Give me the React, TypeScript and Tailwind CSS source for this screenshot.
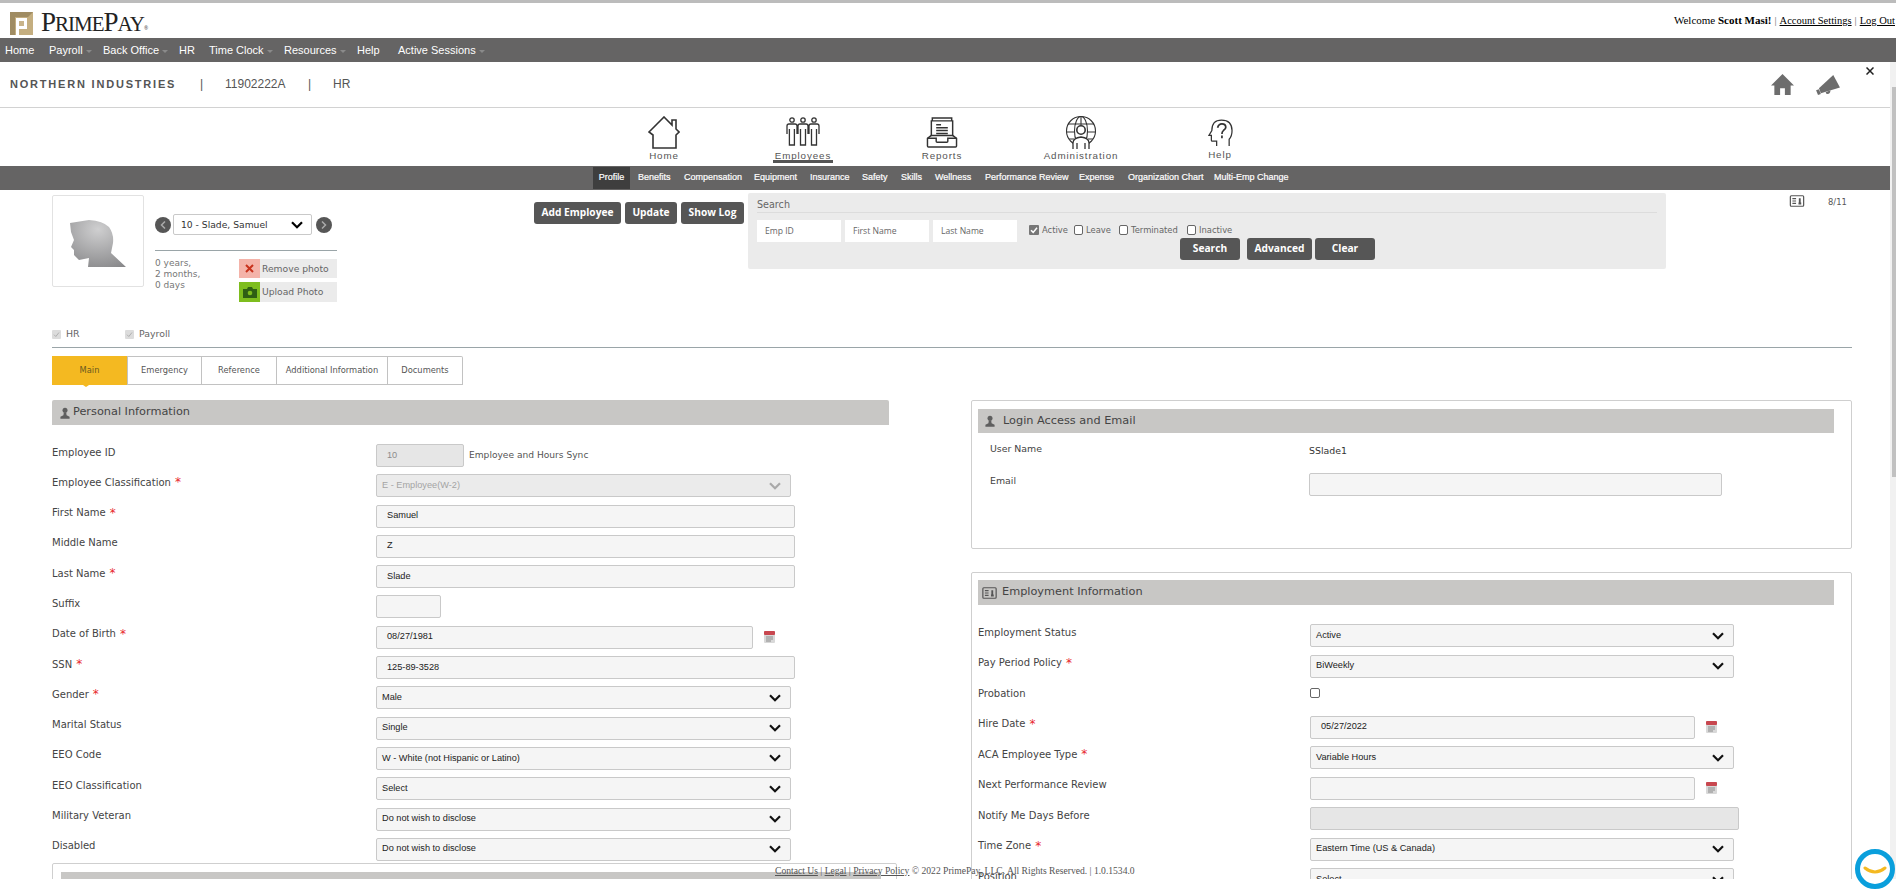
import type { ReactNode } from "react";

const sans = "font-['DejaVu_Sans',sans-serif]";
const arial = "font-['Liberation_Sans',Arial,sans-serif]";
const times = "font-['Liberation_Serif','Times_New_Roman',serif]";
const open = "font-['Open_Sans',sans-serif]";

const Chevron = ({ className = "" }: { className?: string }) => (
  <svg viewBox="0 0 12 8" className={`h-[8px] w-[12px] ${className}`} fill="none" stroke="currentColor" strokeWidth="2.2">
    <path d="M1 1.2 6 6.2 11 1.2" />
  </svg>
);

const PersonIcon = ({ className = "" }: { className?: string }) => (
  <svg viewBox="0 0 12 14" className={className} fill="#5f5f5f">
    <circle cx="6" cy="3.6" r="3" />
    <path d="M4.6 6h2.8l.5 3.6 3.6 2V14H.5v-2.4l3.6-2z" />
  </svg>
);

const CardIcon = ({ className = "" }: { className?: string }) => (
  <svg viewBox="0 0 16 13" className={className} fill="none" stroke="#555" strokeWidth="1.3">
    <rect x="0.8" y="0.8" width="14.4" height="11.4" rx="1" />
    <path d="M3 4h4M3 6.500h4M3 9h4" />
    <path d="M11 3.400v2.600M9.600 9.200h3M11 6v3.200" strokeWidth="2" />
  </svg>
);

const CalendarIcon = () => (
  <svg viewBox="0 0 11 12" className="ml-[11px] h-[12px] w-[11px]">
    <rect width="11" height="12" rx="1" fill="#d8d8d8" />
    <rect width="11" height="4" rx="1" fill="#c8474f" />
    <path d="M2 6h7M2 8h7M2 10h5" stroke="#8b8b8b" strokeWidth="1" />
  </svg>
);

const Req = () => <span className="ml-[4px] text-[12px] leading-none text-[#e8262c]">*</span>;

const Dark = ({ w, children }: { w: string; children: ReactNode }) => (
  <button className={`${w} flex h-[22px] items-center justify-center rounded-[3px] bg-[#565656] ${open} text-[10.2px] font-bold text-white`}>
    {children}
  </button>
);

const Box = ({ w, value, disabled }: { w: string; value?: string; disabled?: boolean }) => (
  <div
    className={`${w} flex h-[23px] shrink-0 items-center rounded-[2px] border border-[#c9c9c9] pl-[10px] ${arial} text-[9.2px] ${
      disabled ? "bg-[#e6e6e6] text-[#8c8c8c]" : "bg-[#f5f5f5] text-[#222]"
    }`}
  >
    {value}
  </div>
);

const Select = ({ w, value, disabled }: { w: string; value: string; disabled?: boolean }) => (
  <div
    className={`${w} flex h-[23px] shrink-0 items-center justify-between rounded-[2px] border border-[#c9c9c9] pl-[5px] pr-[9px] ${arial} text-[9.2px] ${
      disabled ? "bg-[#ebebeb] text-[#a4a4a4]" : "bg-[#f5f5f5] text-[#222]"
    }`}
  >
    {value}
    <Chevron className={disabled ? "text-[#a9a9a9]" : "text-[#111]"} />
  </div>
);

const Row = ({ label, req, w, h, children }: { label: string; req?: boolean; w: string; h: string; children?: ReactNode }) => (
  <div className={`flex ${h} items-start`}>
    <div className={`${w} flex h-[16px] shrink-0 items-center ${sans} text-[10px] text-[#444]`}>
      {label}
      {req && <Req />}
    </div>
    <div className="flex items-center">{children}</div>
  </div>
);

const Bar = ({ icon, title, className }: { icon: ReactNode; title: string; className: string }) => (
  <div className={`flex items-center bg-[#c8c7c5] ${className} ${sans} text-[11.3px] text-[#444]`}>
    {icon}
    {title}
  </div>
);

const topMenu: [string, string, boolean][] = [
  ["Home", "w-[44px]", false],
  ["Payroll", "w-[54px]", true],
  ["Back Office", "w-[76px]", true],
  ["HR", "w-[30px]", false],
  ["Time Clock", "w-[75px]", true],
  ["Resources", "w-[73px]", true],
  ["Help", "w-[41px]", false],
  ["Active Sessions", "w-[90px]", true],
];

const subMenu: [string, string][] = [
  ["Benefits", "w-[46px]"],
  ["Compensation", "w-[70px]"],
  ["Equipment", "w-[56px]"],
  ["Insurance", "w-[52px]"],
  ["Safety", "w-[39px]"],
  ["Skills", "w-[34px]"],
  ["Wellness", "w-[50px]"],
  ["Performance Review", "w-[94px]"],
  ["Expense", "w-[49px]"],
  ["Organization Chart", "w-[86px]"],
  ["Multi-Emp Change", "w-[80px]"],
];

const NavIcon = ({ label, left, width, active, labelTop, iconTop, children }: { label: string; left: string; width: string; active?: boolean; labelTop: string; iconTop: string; children: ReactNode }) => (
  <div className={`flex ${left} ${width} shrink-0 flex-col items-center`}>
    <div className={`h-[34px] ${iconTop}`}>{children}</div>
    <div className={`${labelTop} ${arial} whitespace-nowrap text-[9.8px] leading-[9px] tracking-[0.9px] text-[#555]`}>{label}</div>
    {active && <div className="h-[3px] w-[60px] bg-[#555]" />}
  </div>
);

const personal: { label: string; req?: boolean; el: ReactNode }[] = [
  {
    label: "Employee ID",
    el: (
      <>
        <Box w="w-[88px]" value="10" disabled />
        <span className={`ml-[5px] ${sans} text-[9.1px] text-[#555]`}>Employee and Hours Sync</span>
      </>
    ),
  },
  { label: "Employee Classification", req: true, el: <Select w="w-[415px]" value="E - Employee(W-2)" disabled /> },
  { label: "First Name", req: true, el: <Box w="w-[419px]" value="Samuel" /> },
  { label: "Middle Name", el: <Box w="w-[419px]" value="Z" /> },
  { label: "Last Name", req: true, el: <Box w="w-[419px]" value="Slade" /> },
  { label: "Suffix", el: <Box w="w-[65px]" /> },
  {
    label: "Date of Birth",
    req: true,
    el: (
      <>
        <Box w="w-[377px]" value="08/27/1981" />
        <CalendarIcon />
      </>
    ),
  },
  { label: "SSN", req: true, el: <Box w="w-[419px]" value="125-89-3528" /> },
  { label: "Gender", req: true, el: <Select w="w-[415px]" value="Male" /> },
  { label: "Marital Status", el: <Select w="w-[415px]" value="Single" /> },
  { label: "EEO Code", el: <Select w="w-[415px]" value="W - White (not Hispanic or Latino)" /> },
  { label: "EEO Classification", el: <Select w="w-[415px]" value="Select" /> },
  { label: "Military Veteran", el: <Select w="w-[415px]" value="Do not wish to disclose" /> },
  { label: "Disabled", el: <Select w="w-[415px]" value="Do not wish to disclose" /> },
];

const employment: { label: string; req?: boolean; el: ReactNode }[] = [
  { label: "Employment Status", el: <Select w="w-[424px]" value="Active" /> },
  { label: "Pay Period Policy", req: true, el: <Select w="w-[424px]" value="BiWeekly" /> },
  { label: "Probation", el: <div className="mt-[3px] h-[10px] w-[10px] rounded-[2px] border border-[#666] bg-white" /> },
  {
    label: "Hire Date",
    req: true,
    el: (
      <>
        <Box w="w-[385px]" value="05/27/2022" />
        <CalendarIcon />
      </>
    ),
  },
  { label: "ACA Employee Type", req: true, el: <Select w="w-[424px]" value="Variable Hours" /> },
  {
    label: "Next Performance Review",
    el: (
      <>
        <Box w="w-[385px]" />
        <CalendarIcon />
      </>
    ),
  },
  { label: "Notify Me Days Before", el: <Box w="w-[429px]" disabled /> },
  { label: "Time Zone", req: true, el: <Select w="w-[424px]" value="Eastern Time (US & Canada)" /> },
  { label: "Position", el: <Select w="w-[424px]" value="Select" /> },
];

const Check = ({ label, checked, w }: { label: string; checked?: boolean; w: string }) => (
  <div className={`flex ${w} items-center whitespace-nowrap`}>
    {checked ? (
      <svg viewBox="0 0 10 10" className="mr-[3px] h-[10px] w-[10px] shrink-0">
        <rect width="10" height="10" rx="1" fill="#777" />
        <path d="M2 5.200 4.200 7.400 8 2.800" stroke="#fff" strokeWidth="1.500" fill="none" />
      </svg>
    ) : (
      <div className="mr-[3px] h-[10px] w-[9px] shrink-0 rounded-[2px] border border-[#666] bg-white" />
    )}
    <span className={`${sans} text-[8.400px] text-[#666]`}>{label}</span>
  </div>
);

const Locked = ({ label, w }: { label: string; w: string }) => (
  <div className={`flex ${w} items-center ${sans} text-[9.400px] text-[#666]`}>
    <svg viewBox="0 0 9 9" className="mr-[5px] h-[9px] w-[9px] shrink-0">
      <rect width="9" height="9" rx="1" fill="#dcdcdc" />
      <path d="M2 4.700 3.800 6.500 7 2.500" stroke="#b0b0b0" strokeWidth="1" fill="none" />
    </svg>
    {label}
  </div>
);

const HouseLogo = () => (
  <svg viewBox="0 0 32 33" className="h-[33px] w-[32px]" fill="none" stroke="#333" strokeWidth="1.6">
    <path d="M1 16 16 1l8 8V4h4v9l3 3-3 3v13H5V19z" />
  </svg>
);

const PeopleLogo = () => (
  <svg viewBox="0 0 34 29" className="h-[29px] w-[34px]" fill="none" stroke="#333" strokeWidth="1.3">
    <circle cx="6" cy="3" r="2.200" />
    <circle cx="17" cy="3" r="2.200" />
    <circle cx="28" cy="3" r="2.200" />
    <path d="M1 17V9q0-2 2-2h6q2 0 2 2v8M3.400 12v16h5V12M12 17V9q0-2 2-2h6q2 0 2 2v8M14.500 12v16h5V12M23 17V9q0-2 2-2h6q2 0 2 2v8M25.500 12v16h5V12" />
  </svg>
);

const ReportLogo = () => (
  <svg viewBox="0 0 32 32" className="h-[31px] w-[32px]" fill="none" stroke="#333" strokeWidth="1.500">
    <path d="M6 4V1h20v3" />
    <path d="M5 4h22v15H5z" />
    <path d="M10 8h5M10 11h12M10 14h12M10 17h12" />
    <path d="M5 19 1 22v8q0 1 1 1h28q1 0 1-1v-8l-4-3" />
    <path d="M1 22h9v3q0 1 1 1h10q1 0 1-1v-3h9" />
  </svg>
);

const GlobeLogo = () => (
  <svg viewBox="0 0 32 33" className="h-[33px] w-[32px]" fill="none" stroke="#333" strokeWidth="1.100">
    <circle cx="16" cy="15" r="14.500" />
    <ellipse cx="16" cy="15" rx="6.500" ry="14.500" />
    <path d="M16 .5v9M3 8h26M1.500 16h8M22.500 16h8M4 23h5M23 23h5" />
    <circle cx="16" cy="14" r="4.200" fill="#fff" strokeWidth="1.600" />
    <path d="M8 33v-6q0-5 8-6 8 1 8 6v6M12 33v-6M20 33v-6" fill="#fff" strokeWidth="1.300" />
  </svg>
);

const HelpLogo = () => (
  <svg viewBox="0 0 26 29" className="h-[28px] w-[25px]" fill="none" stroke="#333" strokeWidth="1.300">
    <path d="M9 28v-5H4.500q-1 0-1-1v-5H1l3-5q0-11 10-11 11 0 11 11 0 6-3 9v7" />
    <path d="M10 9q1-4 4.500-4 4 0 4 3.500 0 2-2.500 3.500-1.500 1-1.500 3.500M14.500 17v3" strokeWidth="1.800" />
  </svg>
);

const App = () => {
  return (
    <div className="relative flex h-[892px] w-[1896px] flex-col overflow-hidden bg-white">
      {/* top band and logo */}
      <div className="h-[3px] shrink-0 bg-[#bcbcbc]" />
      <div className="flex h-[35px] shrink-0 items-start justify-between pt-[7px]">
        <div className="ml-[10px] flex items-center">
          <svg viewBox="0 0 23 23" className="h-[23px] w-[23px]">
            <path d="M0 0h23v23H9v-6h8V6H6v17H0z" fill="#c4ae80" />
            <path d="M0 0h23l-5 5H5v18H0z" fill="#a08c62" />
            <rect x="9" y="9" width="5" height="5" fill="#c9b48a" />
          </svg>
          <span className={`ml-[8px] ${times} text-[27px] leading-[24px] tracking-[-1px] text-[#222]`}>
            P<span className="text-[21px]">RIME</span>P<span className="text-[21px]">AY</span>
          </span>
          <span className="mt-[12px] text-[5px] text-[#555]">®</span>
        </div>
        <div className={`mt-[2px] flex items-baseline whitespace-nowrap pr-[1px] ${times} text-[10.500px] text-black`}>
          <span className="text-[11px]">Welcome&nbsp;<b>Scott Masi!</b></span>
          <span className="mx-[3px] text-[#666]">|</span>
          <span className="underline">Account Settings</span>
          <span className="mx-[3px] text-[#666]">|</span>
          <span className="underline">Log Out</span>
        </div>
      </div>
      <div className={`flex h-[24px] shrink-0 items-center bg-[#656464] pl-[5px] pt-[1px] ${arial} text-[11px] text-white`}>
        {topMenu.map(([name, w, caret]) => (
          <div key={name} className={`flex ${w} items-center whitespace-nowrap`}>
            {name}
            {caret && <span className="ml-[3px] mt-[1px] h-0 w-0 border-x-[3px] border-t-[3px] border-x-transparent border-t-[#8a8a8a]" />}
          </div>
        ))}
      </div>

      <div className="flex min-h-0 flex-1 pb-[13px]">
        <div className="flex w-[1890px] shrink-0 flex-col overflow-hidden">
          {/* company line */}
          <div className={`relative flex h-[46px] shrink-0 items-start border-b border-[#d2d2d2] pl-[10px] pt-[13px] ${arial} text-[12px] text-[#555]`}>
            <span className="w-[190px] text-[11px] font-bold leading-[18px] tracking-[1.8px]">NORTHERN INDUSTRIES</span>
            <span className="w-[25px]">|</span>
            <span className="w-[83px]">11902222A</span>
            <span className="w-[25px]">|</span>
            <span>HR</span>
            <svg viewBox="0 0 24 24" className="absolute left-[1771px] top-[11px] h-[23px] w-[23px]" fill="#6d6d6d">
              <path d="M12 1 24 13h-3.500v10h-6v-7h-5v7h-6V13H0z" />
            </svg>
            <svg viewBox="0 0 26 22" className="absolute left-[1816px] top-[13px] h-[21px] w-[25px]" fill="#6d6d6d">
              <path d="M18 0 25 13 5 19 3 14z" />
              <path d="M0 16 3 15l2 5-3 1zM10 18l5-2q0 4-3 4-1.500 0-2-2z" />
            </svg>
            <svg viewBox="0 0 8 8" className="absolute left-[1866px] top-[5px] h-[8px] w-[8px]" stroke="#222" strokeWidth="1.500">
              <path d="M.5.5l7 7M7.500.5l-7 7" />
            </svg>
          </div>

          {/* main icons */}
          <div className="flex h-[58px] shrink-0 items-start pt-[8px]">
            <NavIcon label="Home" left="ml-[633px]" width="w-[62px]" iconTop="" labelTop="mt-[1px]"><HouseLogo /></NavIcon>
            <NavIcon label="Employees" left="ml-[77px]" width="w-[62px]" active iconTop="pt-[1px]" labelTop="mt-[1px]"><PeopleLogo /></NavIcon>
            <NavIcon label="Reports" left="ml-[77px]" width="w-[62px]" iconTop="pt-[1px]" labelTop="mt-[1px]"><ReportLogo /></NavIcon>
            <NavIcon label="Administration" left="ml-[68px]" width="w-[80px]" iconTop="" labelTop="mt-[1px]"><GlobeLogo /></NavIcon>
            <NavIcon label="Help" left="ml-[68px]" width="w-[62px]" iconTop="pt-[3px]" labelTop="mt-[0px]"><HelpLogo /></NavIcon>
          </div>

          {/* sub nav */}
          <div className={`flex h-[24px] shrink-0 items-center bg-[#656464] pl-[593px] ${arial} text-[9px] text-white [-webkit-text-stroke:0.2px_white]`}>
            <div className="flex h-[22px] w-[37px] items-center justify-center bg-[#3e3e3e]">Profile</div>
            <div className="w-[8px]" />
            {subMenu.map(([name, w]) => (
              <div key={name} className={`${w} whitespace-nowrap`}>{name}</div>
            ))}
          </div>

          {/* employee header */}
          <div className="flex h-[137px] shrink-0 items-start pt-[3px]">
            <div className="ml-[52px] mt-[2px] flex h-[92px] w-[92px] shrink-0 items-start rounded-[2px] border border-[#e2e2e2] pl-[16px] pt-[24px]">
              <svg viewBox="0 0 58 47" className="h-[47px] w-[58px]">
                <defs>
                  <radialGradient id="head" cx="0.5" cy="0.2" r="0.9">
                    <stop offset="0" stopColor="#cfcfd0" />
                    <stop offset="1" stopColor="#88888a" />
                  </radialGradient>
                </defs>
                <path d="M1 3 20 0q14 1 20 7 5 7 4 16l-2 10 15 14H19l1-9-10 2-5-5v-5l-3-3 3-7-3-8z" fill="url(#head)" />
              </svg>
            </div>
            <div className="ml-[11px] mt-[21px] flex w-[182px] shrink-0 flex-col">
              <div className="flex items-center">
                <div className="flex h-[16px] w-[16px] items-center justify-center rounded-full bg-[#565656] text-[#aaa]">
                  <svg viewBox="0 0 6 8" className="h-[8px] w-[6px]" fill="none" stroke="currentColor" strokeWidth="1.500"><path d="M5 .5 1.500 4 5 7.500" /></svg>
                </div>
                <div className={`ml-[2px] flex h-[21px] w-[139px] items-center justify-between rounded-[2px] border border-[#c9c9c9] pl-[7px] pr-[8px] ${sans} text-[9.200px] text-[#333]`}>
                  10 - Slade, Samuel
                  <Chevron className="text-black" />
                </div>
                <div className="ml-[4px] flex h-[16px] w-[16px] items-center justify-center rounded-full bg-[#565656] text-[#aaa]">
                  <svg viewBox="0 0 6 8" className="h-[8px] w-[6px]" fill="none" stroke="currentColor" strokeWidth="1.500"><path d="M1 .5 4.500 4 1 7.500" /></svg>
                </div>
              </div>
              <div className="mt-[15px] border-t border-[#9aa5a8]" />
              <div className="mt-[8px] flex">
                <div className={`-mt-[1px] w-[84px] ${sans} text-[9px] leading-[11px] text-[#777]`}>
                  0 years,<br />2 months,<br />0 days
                </div>
                <div className="flex w-[98px] flex-col gap-[4px]">
                  <div className={`flex h-[19px] items-center bg-[#ebebeb] ${sans} text-[9.200px] text-[#666]`}>
                    <div className="mr-[2px] flex h-[19px] w-[21px] items-center justify-center bg-[#f4b3a9]">
                      <svg viewBox="0 0 9 9" className="h-[9px] w-[9px]" stroke="#c8321c" strokeWidth="2"><path d="M1 1l7 7M8 1 1 8" /></svg>
                    </div>
                    Remove photo
                  </div>
                  <div className={`flex h-[20px] items-center bg-[#ebebeb] ${sans} text-[9.200px] text-[#666]`}>
                    <div className="mr-[2px] flex h-[20px] w-[21px] items-center justify-center bg-[#7ebd1e]">
                      <svg viewBox="0 0 14 11" className="h-[11px] w-[14px]">
                        <path d="M0 2h4l1-2h4l1 2h4v9H0z" fill="#2f5f14" />
                        <circle cx="7" cy="6" r="2.300" fill="#7ebd1e" />
                      </svg>
                    </div>
                    Upload Photo
                  </div>
                </div>
              </div>
            </div>
            <div className="ml-[197px] mt-[9px] flex gap-[4px]">
              <Dark w="w-[87px]">Add Employee</Dark>
              <Dark w="w-[52px]">Update</Dark>
              <Dark w="w-[63px]">Show Log</Dark>
            </div>
            <div className="ml-[4px] flex h-[76px] w-[918px] shrink-0 flex-col rounded-[2px] bg-[#ebebeb] px-[9px] pt-[5px]">
              <div className={`h-[14px] border-b border-[#dcdcdc] pb-[14px] ${sans} text-[9.600px] leading-[13px] text-[#666]`}>Search</div>
              <div className="mt-[7px] flex items-start">
                {["Emp ID", "First Name", "Last Name"].map((p) => (
                  <div key={p} className={`mr-[4px] flex h-[22px] w-[84px] items-center bg-white pl-[8px] ${open} text-[8.600px] text-[#666]`}>{p}</div>
                ))}
                <div className="ml-[8px] mt-[4px] flex">
                  <Check label="Active" checked w="w-[45px]" />
                  <Check label="Leave" w="w-[45px]" />
                  <Check label="Terminated" w="w-[68px]" />
                  <Check label="Inactive" w="w-[50px]" />
                </div>
              </div>
              <div className="ml-[423px] -mt-[4px] flex gap-[7px]">
                <Dark w="w-[60px]">Search</Dark>
                <div className="flex gap-[3px]">
                  <Dark w="w-[65px]">Advanced</Dark>
                  <Dark w="w-[60px]">Clear</Dark>
                </div>
              </div>
            </div>
            <CardIcon className="ml-[123px] mt-[2px] h-[12px] w-[16px]" />
            <span className={`ml-[23px] mt-[3px] ${sans} text-[8.400px] text-[#555]`}>8/11</span>
          </div>

          {/* product checks */}
          <div className="ml-[52px] flex h-[21px] w-[1800px] shrink-0 items-center border-b border-[#9aa5a8] pb-[5px]">
            <Locked label="HR" w="w-[73px]" />
            <Locked label="Payroll" w="w-[80px]" />
          </div>

          {/* tabs */}
          <div className={`ml-[52px] mt-[8px] flex h-[29px] shrink-0 ${sans} text-[8.300px] text-[#555]`}>
            <div className="relative flex w-[75px] items-center justify-center bg-[#f4b921] text-[#6b5a20]">
              Main
              <span className="absolute -bottom-[2px] left-[31px] h-0 w-0 border-x-[3px] border-t-[2px] border-x-transparent border-t-[#f4b921]" />
            </div>
            <div className="flex w-[75px] items-center justify-center border border-[#c2c2c2]">Emergency</div>
            <div className="flex w-[75px] items-center justify-center border-y border-r border-[#c2c2c2]">Reference</div>
            <div className="flex w-[111px] items-center justify-center border-y border-r border-[#c2c2c2]">Additional Information</div>
            <div className="flex w-[75px] items-center justify-center rounded-tr-[2px] border-y border-r border-[#c2c2c2]">Documents</div>
          </div>

          {/* form columns */}
          <div className="mt-[15px] flex min-h-0 flex-1 overflow-hidden">
            <div className="ml-[52px] w-[845px] shrink-0">
              <Bar icon={<PersonIcon className="mr-[3px] h-[12px] w-[10px]" />} title="Personal Information" className="h-[25px] w-[837px] rounded-t-[2px] pl-[8px]" />
              <div className="mt-[19px]">
                {personal.map((r) => (
                  <Row key={r.label} label={r.label} req={r.req} w="w-[324px]" h="h-[30.3px]">{r.el}</Row>
                ))}
              </div>
              <div className="mt-[-5px] h-[40px] rounded-t-[2px] border border-[#cfcfcf] px-[8px] pt-[8px]">
                <div className="h-[30px] w-[820px] bg-[#c8c7c5]" />
              </div>
            </div>

            <div className="ml-[74px] w-[881px] shrink-0">
              <div className="h-[149px] rounded-[2px] border border-[#cfcfcf] px-[6px] pt-[8px]">
                <Bar icon={<PersonIcon className="ml-[7px] mr-[8px] h-[12px] w-[10px]" />} title="Login Access and Email" className="h-[24px] w-[856px]" />
                <div className={`mt-[9px] flex h-[25px] items-start pl-[12px] ${sans} text-[9.400px] text-[#444]`}>
                  <span className="w-[319px]">User Name</span>
                  <span className="mt-[2px] text-[#333]">SSlade1</span>
                </div>
                <div className="mt-[6px] flex items-start pl-[12px]">
                  <span className={`w-[319px] pt-[1px] ${sans} text-[9.400px] text-[#444]`}>Email</span>
                  <Box w="w-[413px]" />
                </div>
              </div>
              <div className="mt-[23px] h-[400px] rounded-t-[2px] border border-[#cfcfcf] px-[6px] pt-[7px]">
                <Bar icon={<CardIcon className="ml-[4px] mr-[5px] h-[12px] w-[15px]" />} title="Employment Information" className="h-[25px] w-[856px]" />
                <div className="mt-[19px]">
                  {employment.map((r) => (
                    <Row key={r.label} label={r.label} req={r.req} w="w-[332px]" h="h-[30.5px]">{r.el}</Row>
                  ))}
                </div>
              </div>
            </div>
          </div>
        </div>

        {/* page scrollbar */}
        <div className="flex-1 bg-[#f1f1f1] pl-[2px] pt-[25px]">
          <div className="h-[390px] bg-[#c1c1c1]" />
        </div>
      </div>

      {/* sticky footer */}
      <div className={`absolute left-[775px] top-[864px] whitespace-nowrap ${times} text-[9.600px] text-[#555]`}>
        <span className="underline">Contact Us</span> | <span className="underline">Legal</span> | <span className="underline">Privacy Policy</span> © 2022 PrimePay, LLC. All Rights Reserved. | 1.0.1534.0
      </div>

      {/* chat widget */}
      <div className="absolute left-[1855px] top-[849px] flex h-[40px] w-[40px] items-center justify-center rounded-full border-[5px] border-[#0a9fdc] bg-white">
        <svg viewBox="0 0 24 9" className="mt-[3px] h-[9px] w-[24px]" fill="none" stroke="#f4b921" strokeWidth="3" strokeLinecap="round">
          <path d="M2 2q10 8 20 0" />
        </svg>
      </div>
    </div>
  );
};

export default App;
